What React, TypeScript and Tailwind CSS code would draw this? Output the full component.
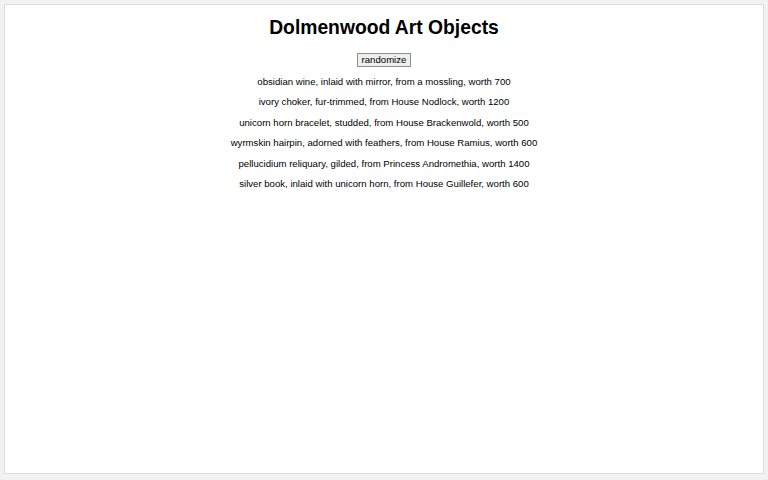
const items = [
  "obsidian wine, inlaid with mirror, from a mossling, worth 700",
  "ivory choker, fur-trimmed, from House Nodlock, worth 1200",
  "unicorn horn bracelet, studded, from House Brackenwold, worth 500",
  "wyrmskin hairpin, adorned with feathers, from House Ramius, worth 600",
  "pellucidium reliquary, gilded, from Princess Andromethia, worth 1400",
  "silver book, inlaid with unicorn horn, from House Guillefer, worth 600",
];

export default function App() {
  return (
    <div className="h-[480px] w-[768px] bg-[#f2f2f2] p-1 font-['Liberation_Sans',Arial,sans-serif] text-black">
      <div className="flex h-[470px] flex-col items-center border border-[#dcdcdc] bg-white pt-[9px]">
        <h1 className="text-[19.3px] font-bold leading-[28px]">Dolmenwood Art Objects</h1>
        <button
          type="button"
          className="mt-[11px] border border-[#8f8f8f] bg-[#efefef] px-[4px] text-[9.6px] leading-[12px]"
        >
          randomize
        </button>
        <ul className="mt-[5px] flex flex-col items-center">
          {items.map((item) => (
            <li key={item} className="text-[9.6px] leading-[20.4px]">
              {item}
            </li>
          ))}
        </ul>
      </div>
    </div>
  );
}
